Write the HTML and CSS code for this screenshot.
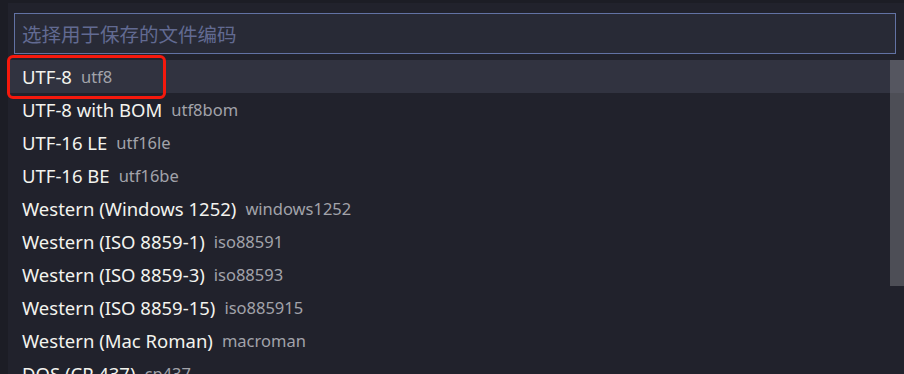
FILE: index.html
```html
<!doctype html>
<html lang="zh-CN">
<head>
	<meta charset="utf-8">
	<title>选择用于保存的文件编码</title>
	<link rel="stylesheet" href="styles.css">
</head>
<body>
<div class="editor-edge"></div>

<div class="quick-pick">
	<div class="input-wrap">
		<div class="input">选择用于保存的文件编码</div>
	</div>

	<div class="list">
		<div class="row selected"><span class="label">UTF-8</span><span class="desc">utf8</span></div>
		<div class="row"><span class="label">UTF-8 with BOM</span><span class="desc">utf8bom</span></div>
		<div class="row"><span class="label">UTF-16 LE</span><span class="desc">utf16le</span></div>
		<div class="row"><span class="label">UTF-16 BE</span><span class="desc">utf16be</span></div>
		<div class="row"><span class="label">Western (Windows 1252)</span><span class="desc">windows1252</span></div>
		<div class="row"><span class="label">Western (ISO 8859-1)</span><span class="desc">iso88591</span></div>
		<div class="row"><span class="label">Western (ISO 8859-3)</span><span class="desc">iso88593</span></div>
		<div class="row"><span class="label">Western (ISO 8859-15)</span><span class="desc">iso885915</span></div>
		<div class="row"><span class="label">Western (Mac Roman)</span><span class="desc">macroman</span></div>
		<div class="row"><span class="label">DOS (CP 437)</span><span class="desc">cp437</span></div>

		<div class="scrollbar"></div>
		<div class="highlight"></div>
	</div>
</div>
</body>
</html>
```

FILE: styles.css
```css
html, body {
	margin: 0;
	height: 100%;
	overflow: hidden;
}
body {
	display: flex;
	background: #1c1d25;
	font-family: "Noto Sans", "Noto Sans CJK SC", sans-serif;
}

.editor-edge {
	width: 8px;
	flex: none;
}

.quick-pick {
	flex: 1;
	margin-top: 3px;
	background: #21222c;
	display: flex;
	flex-direction: column;
}

.input-wrap {
	padding: 10px 8px 6px 6px;
}
.input {
	height: 39px;
	border: 1px solid #6272a4;
	background: #282a36;
	color: #626a92;
	font-family: "Noto Sans CJK SC", sans-serif;
	font-size: 19.5px;
	line-height: 39px;
	padding-left: 7px;
}

.list {
	position: relative;
	flex: 1;
}

.row {
	height: 33px;
	display: flex;
	align-items: center;
	padding-left: 14px;
	color: #f3f3ee;
	font-size: 18.5px;
	white-space: nowrap;
}
.row.selected {
	background: #313340;
}
.desc {
	margin-left: 9px;
	color: #a2a3aa;
	font-size: 16.5px;
}

/* overlays */
.scrollbar {
	position: absolute;
	right: 0;
	top: 0;
	width: 14px;
	height: 226px;
	background: rgba(121, 121, 128, 0.5);
}
.highlight {
	position: absolute;
	left: -1px;
	top: -5px;
	width: 153px;
	height: 38px;
	border: 3px solid #f5190d;
	border-radius: 6px;
}
```
